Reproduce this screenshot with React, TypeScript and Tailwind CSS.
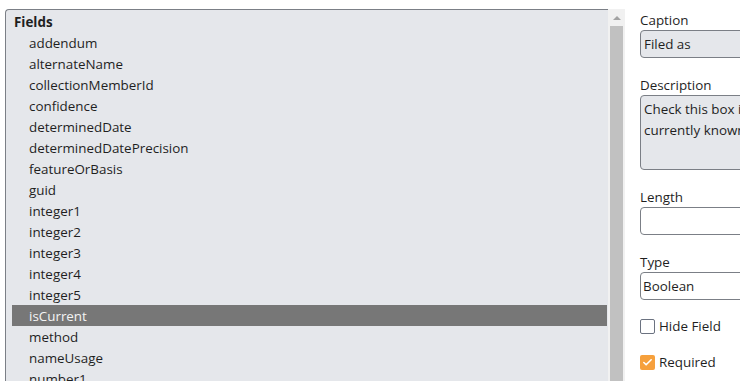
import { Check } from 'lucide-react'

const fields = [
  'addendum',
  'alternateName',
  'collectionMemberId',
  'confidence',
  'determinedDate',
  'determinedDatePrecision',
  'featureOrBasis',
  'guid',
  'integer1',
  'integer2',
  'integer3',
  'integer4',
  'integer5',
  'isCurrent',
  'method',
  'nameUsage',
  'number1',
  'number2',
  'number3',
]

const font = { fontFamily: '"Segoe UI", "Open Sans", sans-serif' }

export default function App() {
  const selected = 'isCurrent'

  return (
    <div
      className="h-[381px] w-[740px] overflow-hidden bg-white text-[13.4px] text-[#1f1f1f]"
      style={font}
    >
      <div className="flex pt-[9px] pl-[5px]">
        {/* Lista de campos */}
        <div className="flex h-[420px] w-[620px] shrink-0">
          <div className="flex-1 rounded-tl-[4px] border-l border-t border-[#7b7f86] bg-[#e5e7eb] pt-[1px] pl-[6px] pr-[1px]">
            <div className="h-[21px] pl-[2px] font-bold leading-[22px]">Fields</div>
            {fields.map(f => (
              <div
                key={f}
                className={`h-[21px] pl-[17px] leading-[22px] ${
                  f === selected ? 'bg-[#777777] text-[#f4f4f4]' : ''
                }`}
              >
                {f}
              </div>
            ))}
          </div>
          {/* Barra de desplazamiento */}
          <div className="flex w-[17px] flex-col items-center bg-[#f1f1f1]">
            <div className="flex h-[17px] w-full items-center justify-center">
              <div className="h-0 w-0 border-x-[4px] border-b-[4px] border-x-transparent border-b-[#a3a3a3]" />
            </div>
            <div className="w-[13px] flex-1 bg-[#c1c1c1]" />
          </div>
        </div>

        {/* Propiedades */}
        <div className="ml-[15px] flex w-[200px] shrink-0 flex-col">
          <label className="mt-[2px] h-[19px] leading-[19px]">Caption</label>
          <div className="h-[28px] rounded-[4px] border border-[#7b7f86] bg-[#e5e7eb] px-[3px] leading-[26px]">
            Filed as
          </div>

          <label className="mt-[18px] h-[19px] leading-[19px]">Description</label>
          <div className="h-[75px] rounded-[4px] border border-[#7b7f86] bg-[#e5e7eb] px-[3px] pt-[3px] leading-[21px]">
            Check this box if the
            <br />
            currently known
          </div>

          <label className="mt-[18px] h-[19px] leading-[19px]">Length</label>
          <div className="h-[28px] rounded-[4px] border border-[#7b7f86] bg-white" />

          <label className="mt-[18px] h-[19px] leading-[19px]">Type</label>
          <div className="h-[28px] rounded-[4px] border border-[#7b7f86] bg-white px-[2px] leading-[27px]">
            Boolean
          </div>

          <div className="mt-[19px] flex h-[15px] items-center gap-[4px]">
            <span className="h-[15px] w-[15px] rounded-[2px] border border-[#6b7280] bg-white" />
            <span className="leading-[15px]">Hide Field</span>
          </div>

          <div className="mt-[21px] flex h-[15px] items-center gap-[4px]">
            <span className="flex h-[15px] w-[15px] items-center justify-center rounded-[2px] bg-[#f6a03c]">
              <Check className="h-[11px] w-[11px] text-white" strokeWidth={3.5} />
            </span>
            <span className="leading-[15px]">Required</span>
          </div>
        </div>
      </div>
    </div>
  )
}
